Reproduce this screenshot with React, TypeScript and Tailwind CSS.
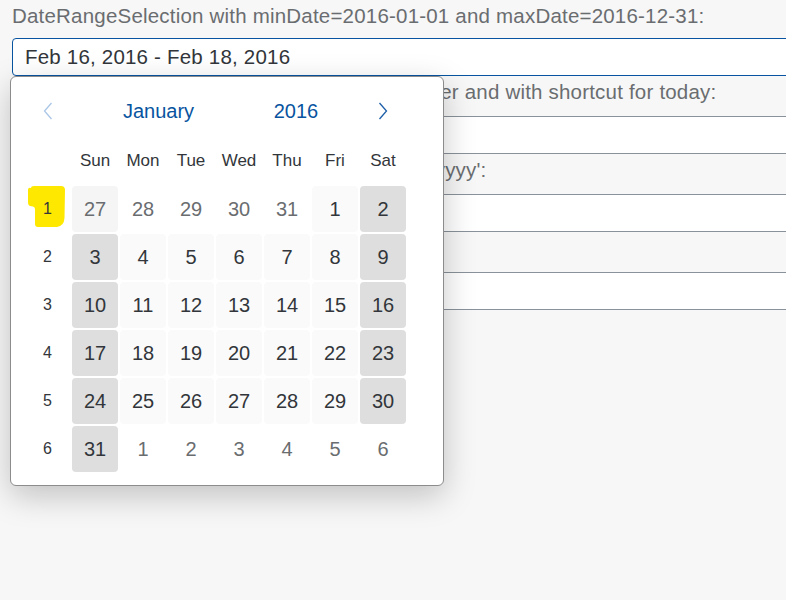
import React from "react";

type Kind = "prevWeekend" | "other" | "weekend" | "weekday";

const rows: { n: number; k: Kind }[][] = [
  [
    { n: 27, k: "prevWeekend" },
    { n: 28, k: "other" },
    { n: 29, k: "other" },
    { n: 30, k: "other" },
    { n: 31, k: "other" },
    { n: 1, k: "weekday" },
    { n: 2, k: "weekend" },
  ],
];
for (let w = 0; w < 4; w++) {
  const r: { n: number; k: Kind }[] = [];
  for (let d = 0; d < 7; d++) {
    r.push({ n: 3 + w * 7 + d, k: d === 0 || d === 6 ? "weekend" : "weekday" });
  }
  rows.push(r);
}
rows.push([
  { n: 31, k: "weekend" },
  { n: 1, k: "other" },
  { n: 2, k: "other" },
  { n: 3, k: "other" },
  { n: 4, k: "other" },
  { n: 5, k: "other" },
  { n: 6, k: "other" },
]);

const kindClass: Record<Kind, string> = {
  prevWeekend: "bg-[#f5f5f5] text-[#6a6d70]",
  other: "text-[#6a6d70]",
  weekend: "bg-[#dedede] text-[#32363a]",
  weekday: "bg-[#fafafa] text-[#32363a]",
};

const dayNames = ["Sun", "Mon", "Tue", "Wed", "Thu", "Fri", "Sat"];

function Label({ text, first }: { text: string; first?: boolean }) {
  return (
    <div
      className={
        (first ? "h-[38px] " : "h-[40px] ") +
        "pt-[4px] text-[20.5px] leading-[24px] tracking-[0.2px] text-[#6a6d70] whitespace-nowrap"
      }
    >
      {text}
    </div>
  );
}

function Input({ value, focused }: { value?: string; focused?: boolean }) {
  return (
    <div
      className={
        "h-[38px] w-[800px] shrink-0 bg-white rounded-l-[4px] border flex items-center pl-[12px] text-[20.5px] tracking-[0.2px] text-[#32363a] " +
        (focused ? "border-[#0854a0]" : "border-[#89919a]")
      }
    >
      {value}
    </div>
  );
}

export default function App() {
  return (
    <div className="relative w-[786px] h-[600px] overflow-hidden bg-[#f7f7f7] font-['Liberation_Sans',Arial,sans-serif]">
      <div className="flex flex-col pl-[12px]">
        <Label first text="DateRangeSelection with minDate=2016-01-01 and maxDate=2016-12-31:" />
        <Input focused value="Feb 16, 2016 - Feb 18, 2016" />
        <Label text="DateRangeSelection with a calendar date picker and with shortcut for today:" />
        <Input />
        <Label text="DateRangeSelection with displayFormat 'd.M.yyyy':" />
        <Input />
        <Label text="DateRangeSelection disabled:" />
        <Input />
      </div>

      {/* Calendar popup */}
      <div className="absolute left-[10px] top-[76px] w-[434px] h-[410px] bg-white border border-[#8c8c8c] rounded-[6px] shadow-[0_10px_32px_rgba(0,0,0,0.22)] pl-[12px] pt-[9px]">
        {/* header */}
        <div className="flex h-[49px] items-center text-[20px] text-[#0854a0]">
          <div className="w-[49px] flex justify-center">
            <svg width="10" height="18" viewBox="0 0 10 18">
              <polyline points="8.5,1 1.5,9 8.5,17" fill="none" stroke="#a9c6e6" strokeWidth="1.3" />
            </svg>
          </div>
          <div className="w-[173px] text-center">January</div>
          <div className="w-[102px] text-center">2016</div>
          <div className="w-[13px]" />
          <div className="w-[46px] flex justify-center">
            <svg width="10" height="18" viewBox="0 0 10 18">
              <polyline points="1.5,1 8.5,9 1.5,17" fill="none" stroke="#1d5fa8" strokeWidth="1.3" />
            </svg>
          </div>
        </div>
        {/* day names */}
        <div className="flex h-[48px] items-center pt-[3px] text-[17px] leading-[20px] text-[#32363a]">
          <div className="w-[49px]" />
          <div className="grid grid-cols-[repeat(7,46px)] gap-x-[2px]">
            {dayNames.map((d) => (
              <div key={d} className="text-center">
                {d}
              </div>
            ))}
          </div>
        </div>
        {/* days */}
        <div className="mt-[3px] flex">
          <div className="w-[49px] flex flex-col gap-y-[2px]">
            {[1, 2, 3, 4, 5, 6].map((w) => (
              <div key={w} className="relative h-[46px] flex items-center justify-center text-[16px] leading-[18px] text-[#32363a]">
                {w === 1 && (
                  <svg
                    className="absolute left-[4px] top-0"
                    width="40"
                    height="44"
                    viewBox="0 0 40 44"
                  >
                    <path
                      d="M4 2 Q4 0 7 0 L34 0 Q38 0 38 4 L37.5 32 Q37 40 30 41 L11 41 Q8 41 8 38 L8 23 Q8 21 6 20.5 L3 20 Q1 19.5 1 16 L1 4 Q1 1 4 2 Z"
                      fill="#ffe800"
                    />
                  </svg>
                )}
                <span className="relative">{w}</span>
              </div>
            ))}
          </div>
          <div className="grid grid-cols-[repeat(7,46px)] auto-rows-[46px] gap-[2px]">
            {rows.flat().map((c, i) => (
              <div
                key={i}
                className={
                  "rounded-[4px] flex items-center justify-center text-[20px] leading-[22px] " + kindClass[c.k]
                }
              >
                {c.n}
              </div>
            ))}
          </div>
        </div>
      </div>
    </div>
  );
}
